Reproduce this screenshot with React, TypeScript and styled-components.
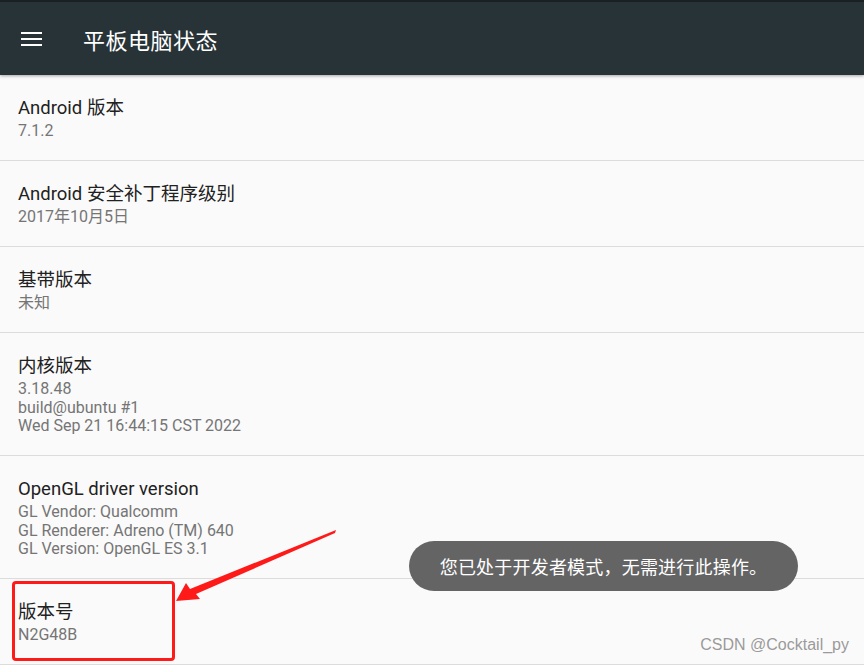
import React from "react";
import styled, { createGlobalStyle } from "styled-components";

const GlobalStyle = createGlobalStyle`
  html, body {
    margin: 0;
    padding: 0;
    background: #fafafa;
  }
  body {
    font-family: Roboto, "Noto Sans CJK SC", sans-serif;
  }
`;

const Page = styled.div`
  position: relative;
  width: 864px;
  height: 665px;
  overflow: hidden;
  background: #fafafa;
`;

const StatusStrip = styled.div`
  height: 2px;
  background: #1b2125;
`;

const Toolbar = styled.header`
  position: relative;
  z-index: 1;
  display: flex;
  align-items: center;
  height: 73px;
  padding-left: 21px;
  background: #283338;
  box-shadow: 0 1px 3px rgba(0, 0, 0, 0.35);
`;

const MenuButton = styled.div`
  display: flex;
  flex-direction: column;
  gap: 4px;
  width: 21px;
  margin-right: 41px;
  span {
    display: block;
    height: 2px;
    background: #fff;
  }
`;

const ToolbarTitle = styled.h1`
  margin: 0;
  font-size: 22px;
  font-weight: 400;
  color: #fff;
  letter-spacing: 0.5px;
  font-family: Roboto, "Noto Sans CJK SC", sans-serif;
`;

const List = styled.div`
  display: flex;
  flex-direction: column;
`;

const Row = styled.div`
  display: flex;
  flex-direction: column;
  padding: 20.5px 18px 19.5px;
  border-bottom: 1px solid #dcdcdc;
`;

const Title = styled.div`
  font-size: 18.5px;
  line-height: 24px;
  color: #212121;
`;

const Summary = styled.div`
  margin-top: 2.5px;
  font-size: 16px;
  line-height: 18.5px;
  color: #757575;
  white-space: pre-line;
`;

const Toast = styled.div`
  position: absolute;
  left: 409px;
  top: 541px;
  width: 389px;
  height: 50px;
  display: flex;
  align-items: center;
  justify-content: center;
  border-radius: 25px;
  background: #646464;
  color: #fff;
  font-size: 18px;
  letter-spacing: 0.2px;
  font-family: "Noto Sans CJK SC", sans-serif;
`;

const Highlight = styled.div`
  position: absolute;
  left: 12px;
  top: 581px;
  width: 157px;
  height: 74px;
  border: 3px solid #ff1a1a;
  border-radius: 4px;
`;

const Arrow = styled.svg`
  position: absolute;
  left: 0;
  top: 0;
  pointer-events: none;
`;

const Watermark = styled.div`
  position: absolute;
  right: 15px;
  bottom: 11px;
  font-family: "Liberation Sans", Arial, sans-serif;
  font-size: 16px;
  color: #9a9a9a;
`;

const rows = [
  { title: "Android 版本", summary: "7.1.2" },
  { title: "Android 安全补丁程序级别", summary: "2017年10月5日" },
  { title: "基带版本", summary: "未知" },
  {
    title: "内核版本",
    summary: "3.18.48\nbuild@ubuntu #1\nWed Sep 21 16:44:15 CST 2022",
  },
  {
    title: "OpenGL driver version",
    summary:
      "GL Vendor: Qualcomm\nGL Renderer: Adreno (TM) 640\nGL Version: OpenGL ES 3.1",
  },
  { title: "版本号", summary: "N2G48B" },
];

export default function App() {
  return (
    <Page>
      <GlobalStyle />
      <StatusStrip />
      <Toolbar>
        <MenuButton>
          <span />
          <span />
          <span />
        </MenuButton>
        <ToolbarTitle>平板电脑状态</ToolbarTitle>
      </Toolbar>
      <List>
        {rows.map((r) => (
          <Row key={r.title}>
            <Title>{r.title}</Title>
            <Summary>{r.summary}</Summary>
          </Row>
        ))}
      </List>
      <Toast>您已处于开发者模式，无需进行此操作。</Toast>
      <Highlight />
      <Arrow width="864" height="665" viewBox="0 0 864 665">
        <polygon
          points="336,530 335,533 196,594 200,599 176,601 186,583 190,589"
          fill="#ff1a1a"
        />
      </Arrow>
      <Watermark>CSDN @Cocktail_py</Watermark>
    </Page>
  );
}
